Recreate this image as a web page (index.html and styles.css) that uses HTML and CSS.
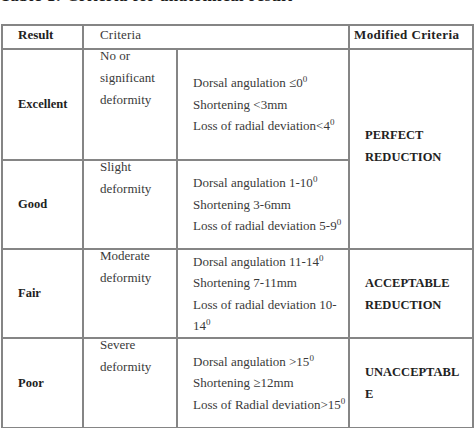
FILE: index.html
```html
<!DOCTYPE html>
<html>
<head>
<meta charset="utf-8">
<link rel="stylesheet" href="styles.css">
</head>
<body>
<div class="caption">Table 1: Criteria for anatomical result</div>
<table class="grid">
  <colgroup>
    <col class="c1"><col class="c2"><col class="c3"><col class="c4">
  </colgroup>
  <tr class="head">
    <td class="h-result">Result</td>
    <td class="h-criteria" colspan="2">Criteria</td>
    <td class="h-mod">Modified Criteria</td>
  </tr>
  <tr class="r1">
    <td class="label">Excellent</td>
    <td class="desc"><div class="desc-in">No or<br>significant<br>deformity</div></td>
    <td class="crit">Dorsal angulation ≤0<sup>0</sup><br>Shortening &lt;3mm<br>Loss of radial deviation&lt;4<sup>0</sup></td>
    <td class="mod" rowspan="2"><div class="mod-in">PERFECT<br>REDUCTION</div></td>
  </tr>
  <tr class="r2">
    <td class="label">Good</td>
    <td class="desc"><div class="desc-in">Slight<br>deformity</div></td>
    <td class="crit">Dorsal angulation 1-10<sup>0</sup><br>Shortening 3-6mm<br>Loss of radial deviation 5-9<sup>0</sup></td>
  </tr>
  <tr class="r3">
    <td class="label">Fair</td>
    <td class="desc"><div class="desc-in">Moderate<br>deformity</div></td>
    <td class="crit">Dorsal angulation 11-14<sup>0</sup><br>Shortening 7-11mm<br>Loss of radial deviation 10-<br>14<sup>0</sup></td>
    <td class="mod">ACCEPTABLE<br>REDUCTION</td>
  </tr>
  <tr class="r4">
    <td class="label">Poor</td>
    <td class="desc"><div class="desc-in">Severe<br>deformity</div></td>
    <td class="crit">Dorsal angulation &gt;15<sup>0</sup><br>Shortening ≥12mm<br>Loss of Radial deviation&gt;15<sup>0</sup></td>
    <td class="mod">UNACCEPTABL<br>E</td>
  </tr>
</table>
</body>
</html>
```
FILE: styles.css
```css
html, body {
  margin: 0;
  padding: 0;
  background: #ffffff;
  overflow: hidden;
}
body {
  width: 474px;
  height: 428px;
  font-family: "Liberation Serif", serif;
  color: #3a3a3a;
}
.caption {
  font-weight: bold;
  font-size: 17px;
  line-height: 16px;
  height: 16px;
  margin-top: -12px;
  color: #1a1a1a;
  white-space: nowrap;
  letter-spacing: 0.4px;
}
.grid {
  margin-top: 20px;
  margin-left: 1px;
  border-collapse: collapse;
  table-layout: fixed;
  width: 471px;
  border: 2px solid #858585;
}
.grid td {
  border: 2px solid #858585;
  padding: 0;
  font-size: 13px;
  line-height: 21.5px;
  vertical-align: middle;
}
.c1 { width: 81px; }
.c2 { width: 94px; }
.c3 { width: 172px; }
.c4 { width: 124px; }
.head td { height: 22px; line-height: 17px; vertical-align: top; }
.r1 td { height: 108px; }
.r2 td { height: 86px; }
.r3 td { height: 86px; }
.r4 td { height: 87px; }
.h-result {
  font-weight: bold;
  font-size: 12.5px;
  color: #222;
  padding-left: 15px !important;
}
.h-criteria {
  padding-left: 16px !important;
  letter-spacing: 0.2px;
}
.h-mod {
  font-weight: bold;
  font-size: 13px;
  color: #222;
  padding-left: 4px !important;
  letter-spacing: 0.4px;
  white-space: nowrap;
}
.label {
  font-weight: bold;
  font-size: 12.5px !important;
  color: #1e1e1e;
  padding-left: 15px !important;
  padding-top: 1px !important;
}
.desc {
  vertical-align: top !important;
  padding-left: 16px !important;
  line-height: 22px !important;
}
.desc-in {
  margin-top: -5px;
}
.crit {
  padding-left: 15px !important;
  white-space: nowrap;
}
.mod {
  font-weight: bold;
  font-size: 12.5px !important;
  color: #222;
  padding-left: 15px !important;
  line-height: 22px !important;
  white-space: nowrap;
}
.mod-in {
  margin-top: -6px;
}
sup {
  font-size: 9px;
  line-height: 0;
  vertical-align: 5px;
}
```
